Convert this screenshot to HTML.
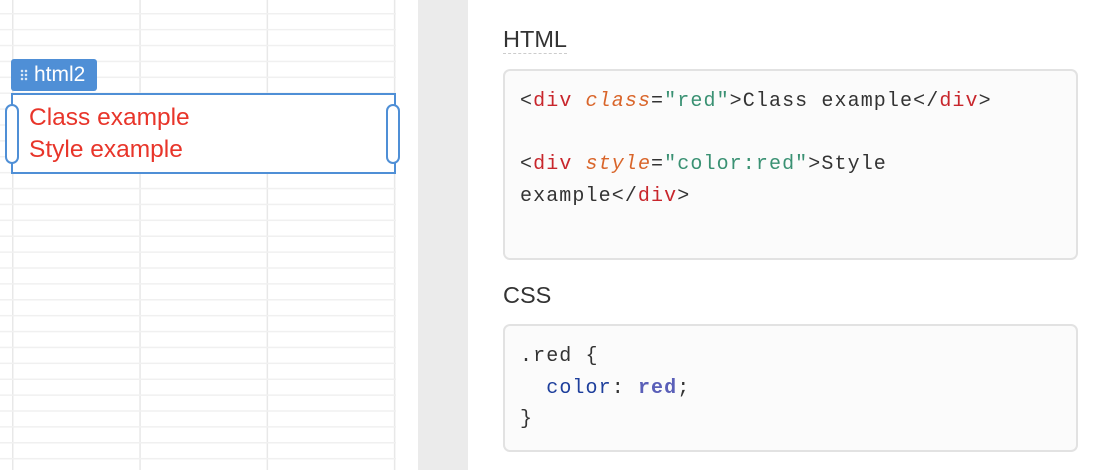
<!DOCTYPE html>
<html><head><style>
*{margin:0;padding:0;box-sizing:border-box}
body{width:1094px;height:470px;position:relative;background:#fff;font-family:"Liberation Sans",sans-serif;overflow:hidden}
.grid{position:absolute;left:0;top:0;width:396px;height:470px;
background-image:linear-gradient(to bottom,#f0f0f0 0,#f0f0f0 1.5px,transparent 1.5px),linear-gradient(to right,#e8e8e8 0,#e8e8e8 1.5px,transparent 1.5px);
background-size:100% 15.9px,127.3px 100%;background-position:0 13px,12px 0}
.bar{position:absolute;left:418px;top:0;width:50px;height:470px;background:#ebebeb}
.tag{position:absolute;left:11px;top:59px;width:86px;height:32px;background:#4f8fd6;border-radius:3px;color:#fff;font-size:21px;line-height:31px;padding-left:23px}
.dots{position:absolute;left:9px;top:10px;width:8px;height:12px;background-image:radial-gradient(circle,#dbe8f7 1.2px,transparent 1.4px);background-size:4px 4px}
.box{position:absolute;left:11px;top:93px;width:385px;height:81px;border:2px solid #4f8fd6;background:#fff}
.txt{position:absolute;left:29px;top:102px;color:#e8352a;font-size:24.5px;line-height:32px}
.h{position:absolute;left:5px;top:104px;width:14px;height:60px;border:2px solid #4f8fd6;border-radius:7px;background:#fff}
.lbl{position:absolute;left:503px;color:#333;font-size:23.5px}
.code{position:absolute;left:503px;width:575px;border:2px solid #e2e2e2;border-radius:7px;background:#fbfbfb;font-family:"Liberation Mono",monospace;font-size:20px;letter-spacing:1.1px;color:#333;padding-left:15px;white-space:pre;line-height:31.7px}
.t{color:#c8262c}.a{color:#d9652a;font-style:italic}.s{color:#3a9173}.p{color:#1e3f9c}.v{color:#5a5fb8;font-weight:bold}
</style></head><body>
<div class="grid"></div>
<div class="bar"></div>
<div class="box"></div>
<div class="h"></div><div class="h" style="left:386px"></div>
<div class="txt">Class example<br>Style example</div>
<div class="tag"><div class="dots"></div>html2</div>
<div class="lbl" style="top:26px;border-bottom:1.5px dashed #ccc;line-height:27px">HTML</div>
<div class="code" style="top:69px;height:191px;padding-top:15px">&lt;<span class="t">div</span> <span class="a">class</span>=<span class="s">"red"</span>&gt;Class example&lt;/<span class="t">div</span>&gt;

&lt;<span class="t">div</span> <span class="a">style</span>=<span class="s">"color:red"</span>&gt;Style
example&lt;/<span class="t">div</span>&gt;</div>
<div class="lbl" style="top:282px">CSS</div>
<div class="code" style="top:324px;height:128px;padding-top:15px">.red {
  <span class="p">color</span>: <span class="v">red</span>;
}</div>
</body></html>
